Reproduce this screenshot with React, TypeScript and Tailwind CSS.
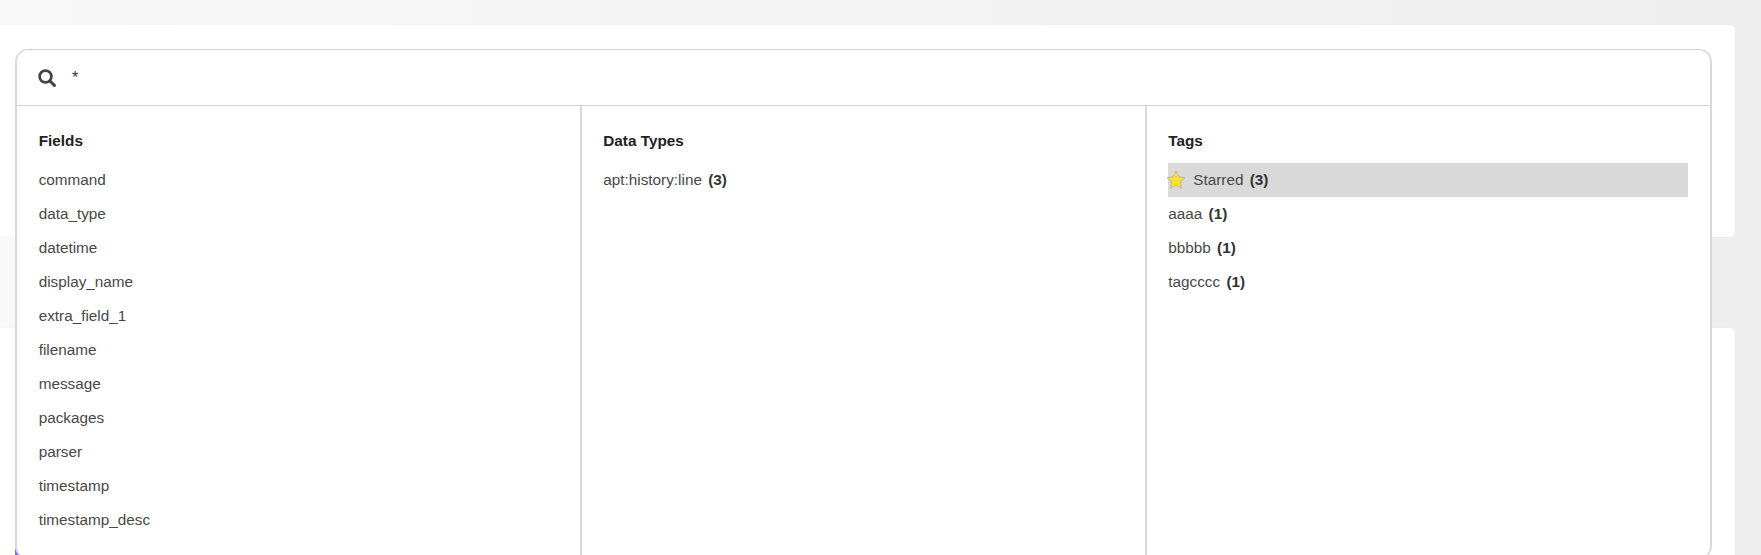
import { useState } from "react";

const fields = [
  "command",
  "data_type",
  "datetime",
  "display_name",
  "extra_field_1",
  "filename",
  "message",
  "packages",
  "parser",
  "timestamp",
  "timestamp_desc",
];

const tags = [
  { name: "aaaa", count: 1 },
  { name: "bbbbb", count: 1 },
  { name: "tagcccc", count: 1 },
];

function Count({ value }: { value: number }) {
  return <b className="ml-[2px] font-bold text-[#333]">({value})</b>;
}

function Row({ children, active }: { children: React.ReactNode; active?: boolean }) {
  return (
    <li className={`flex h-[34px] items-center whitespace-pre ${active ? "bg-[#d9d9d9]" : ""}`}>
      <span>{children}</span>
    </li>
  );
}

function Column({ title, width, children }: { title: string; width?: string; children: React.ReactNode }) {
  return (
    <div className={`pl-[21.7px] pr-[22px] pt-[23px] ${width ?? "flex-1"}`}>
      <h3 className="mb-[10px] h-[24px] leading-[24px] font-bold text-[#222]">{title}</h3>
      <ul>{children}</ul>
    </div>
  );
}

export default function App() {
  const [query, setQuery] = useState("*");

  return (
    <div
      className="relative h-[555px] overflow-hidden bg-gradient-to-r from-[#f8f8f8] to-[#eeeeee] text-[15.3px] text-[#484848]"
      style={{ fontFamily: '"Liberation Sans", Arial, sans-serif' }}
    >
      {/* Cards behind the search overlay */}
      <div className="flex flex-col gap-[91px] pt-[25px] pr-[26px]">
        <div className="h-[212px] rounded-r-[5px] bg-white shadow-[0_0_1px_rgba(0,0,0,0.08)]" />
        <div className="relative h-[300px] rounded-r-[5px] bg-white shadow-[0_0_1px_rgba(0,0,0,0.08)]">
          <div className="absolute left-[15px] top-[220px] h-[20px] w-[6px] bg-[#7070ee]" />
        </div>
      </div>

      {/* Search overlay */}
      <div className="absolute left-[15px] top-[49px] flex h-[510px] w-[1697px] flex-col rounded-[13px] border-x-2 border-y border-x-[#d9d9d9] border-y-[#cfcfcf] bg-white">
        <div className="mr-px flex h-[56px] shrink-0 items-center border-b border-[#cfcfcf] pl-[21px]">
          <svg viewBox="0 0 18 18" className="h-[18px] w-[18px] shrink-0 text-[#444]" fill="none" stroke="currentColor">
            <circle cx="7.5" cy="7.5" r="5.9" strokeWidth="2.7" />
            <path d="M12 12l4.4 4.4" strokeWidth="3" strokeLinecap="round" />
          </svg>
          <input
            value={query}
            onChange={(e) => setQuery(e.target.value)}
            className="ml-[16px] flex-1 text-[16px] font-medium text-[#333] outline-none"
          />
        </div>
        <div className="flex flex-1">
          <Column title="Fields" width="w-[564.6px] shrink-0 border-r-2 border-[#d9d9d9]">
            {fields.map((f) => (
              <Row key={f}>{f}</Row>
            ))}
          </Column>
          <Column title="Data Types" width="w-[565px] shrink-0 border-r-2 border-[#d9d9d9]">
            <Row>
              apt:history:line <Count value={3} />
            </Row>
          </Column>
          <Column title="Tags">
            <Row active>
              <span className="flex items-center">
                <svg viewBox="0 0 24 24" className="-ml-[2px] mr-[7px] h-[20px] w-[20px] shrink-0">
                  <path
                    d="M12 1.2l3.3 6.9 7.5 1-5.5 5.2 1.4 7.5L12 18.2l-6.7 3.6 1.4-7.5-5.5-5.2 7.5-1z"
                    fill="#fde02f"
                    stroke="#bdbba0"
                    strokeWidth="1.2"
                    strokeLinejoin="round"
                  />
                </svg>
                <span>
                  Starred <Count value={3} />
                </span>
              </span>
            </Row>
            {tags.map((t) => (
              <Row key={t.name}>
                {t.name} <Count value={t.count} />
              </Row>
            ))}
          </Column>
        </div>
      </div>
    </div>
  );
}
